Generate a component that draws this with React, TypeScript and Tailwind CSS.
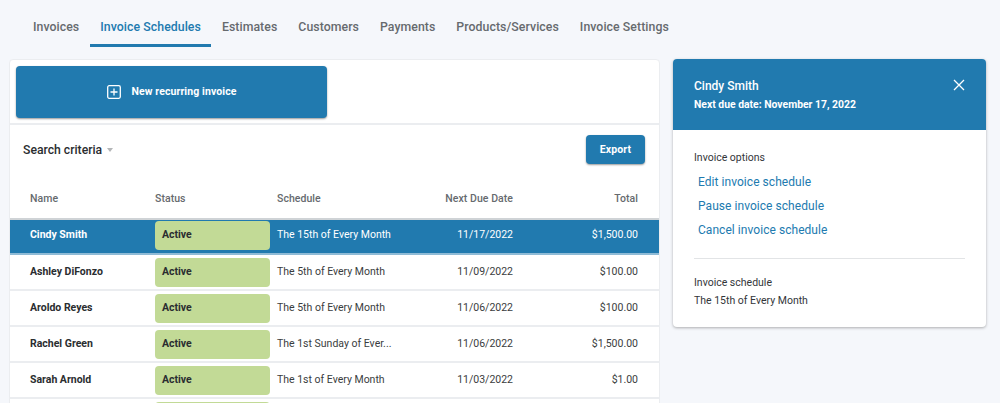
const tabs = ["Invoices", "Invoice Schedules", "Estimates", "Customers", "Payments", "Products/Services", "Invoice Settings"];

const rows = [
  { name: "Cindy Smith", schedule: "The 15th of Every Month", due: "11/17/2022", total: "$1,500.00" },
  { name: "Ashley DiFonzo", schedule: "The 5th of Every Month", due: "11/09/2022", total: "$100.00" },
  { name: "Aroldo Reyes", schedule: "The 5th of Every Month", due: "11/06/2022", total: "$100.00" },
  { name: "Rachel Green", schedule: "The 1st Sunday of Ever...", due: "11/06/2022", total: "$1,500.00" },
  { name: "Sarah Arnold", schedule: "The 1st of Every Month", due: "11/03/2022", total: "$1.00" },
  { name: "", schedule: "", due: "", total: "" },
];

export default function App() {
  return (
    <div className="h-[403px] w-[1000px] overflow-hidden bg-[#f5f7fb] font-['Roboto',sans-serif]">
      <nav className="flex h-[47px] pl-[22.5px]">
        {tabs.map((tab, i) => (
          <a
            key={tab}
            className={`flex items-center border-b-[3px] px-[10.5px] pt-[11px] text-[12.3px] font-medium tracking-[0.06px] ${
              i === 1 ? "border-[#217aaf] text-[#217aaf]" : "border-transparent text-[#666a6e]"
            }`}
          >
            {tab}
          </a>
        ))}
      </nav>

      <div className="mt-3 flex items-start">
        <div className="ml-[9px] w-[651px] rounded-t border border-[#ebedf0] bg-white">
          <div className="border-b-2 border-[#ebedf0] p-[6px] pb-[5px]">
            <button className="flex h-[52px] w-[311px] items-center justify-center gap-[11px] rounded bg-[#217aaf] text-[10.5px] font-bold tracking-[0.1px] text-white shadow-[0_1px_2px_rgba(0,0,0,0.4)]">
              <svg width="14" height="14" viewBox="0 0 14 14" fill="none" stroke="#fff" strokeWidth="1.3">
                <rect x="0.7" y="0.7" width="12.6" height="12.6" rx="1.5" />
                <path d="M7 3.5v7M3.5 7h7" />
              </svg>
              New recurring invoice
            </button>
          </div>

          <div className="flex h-[49px] items-center justify-between px-[13px]">
            <div className="flex items-center gap-[5px] pt-[1px] text-[12.2px] font-medium text-[#2a2d30]">
              Search criteria
              <span className="mt-[1px] h-0 w-0 border-x-[3.5px] border-t-[4px] border-x-transparent border-t-[#b4b6b8]" />
            </div>
            <button className="h-[29px] w-[59px] -translate-x-px rounded bg-[#217aaf] text-[10.5px] font-bold tracking-[0.1px] text-white shadow-[0_1px_2px_rgba(0,0,0,0.4)]">
              Export
            </button>
          </div>

          <div className="grid h-[44px] grid-cols-[125px_122px_120px_116px_1fr] items-center pl-[20px] pr-[21px] pt-[5px] text-[10.5px] font-medium tracking-[0.05px] text-[#666a6e]">
            <div>Name</div>
            <div>Status</div>
            <div>Schedule</div>
            <div className="text-right">Next Due Date</div>
            <div className="text-right">Total</div>
          </div>

          {rows.map((row, i) => (
            <div
              key={i}
              className={`grid grid-cols-[125px_122px_120px_116px_1fr] items-center pl-[20px] pr-[21px] text-[10.5px] ${
                i === 0
                  ? "h-[37px] border-y-2 border-t-[#cfd3d6] border-b-[#8fbbd6] bg-[#217aaf] pb-[3px] text-white"
                  : "h-[36px] border-b-2 border-[#ebedf0] text-[#3a3d40]"
              }`}
            >
              <div className={`font-bold ${i === 0 ? "text-white" : "text-[#2a2d30]"}`}>{row.name}</div>
              <div className="flex h-[29px] w-[115px] items-center rounded-[4px] bg-[#c2da96] pl-[7px] font-bold text-[#2a2d30]">
                {row.name && "Active"}
              </div>
              <div className="whitespace-nowrap">{row.schedule}</div>
              <div className="text-right">{row.due}</div>
              <div className="text-right">{row.total}</div>
            </div>
          ))}
        </div>

        <aside className="ml-[13px] w-[313px] overflow-hidden rounded bg-white shadow-[0_1px_3px_rgba(0,0,0,0.3)]">
          <div className="flex h-[71px] items-start justify-between bg-[#217aaf] pl-[21px] pr-[21px] pt-[20px] text-white">
            <div>
              <div className="text-[12px] leading-[15px] font-medium">Cindy Smith</div>
              <div className="mt-[3px] text-[10.4px] leading-[15px] font-bold">Next due date: November 17, 2022</div>
            </div>
            <svg width="12" height="12" viewBox="0 0 12 12" fill="none" stroke="#fff" strokeWidth="1.3">
              <path d="M1 1l10 10M11 1L1 11" />
            </svg>
          </div>
          <div className="px-[21px] pt-[21px] pb-[17px]">
            <div className="text-[10.5px] leading-[14px] text-[#33363a]">Invoice options</div>
            <div className="mt-[5px] flex flex-col pl-[4px] text-[12px] tracking-[0.05px] text-[#217aaf]">
              <a className="flex h-[24px] items-center">Edit invoice schedule</a>
              <a className="flex h-[24px] items-center">Pause invoice schedule</a>
              <a className="flex h-[24px] items-center">Cancel invoice schedule</a>
            </div>
            <div className="mt-[16px] border-t border-[#e2e4e6] pt-[15px] text-[10.5px] leading-[18px] text-[#33363a]">
              <div>Invoice schedule</div>
              <div>The 15th of Every Month</div>
            </div>
          </div>
        </aside>
      </div>
    </div>
  );
}
